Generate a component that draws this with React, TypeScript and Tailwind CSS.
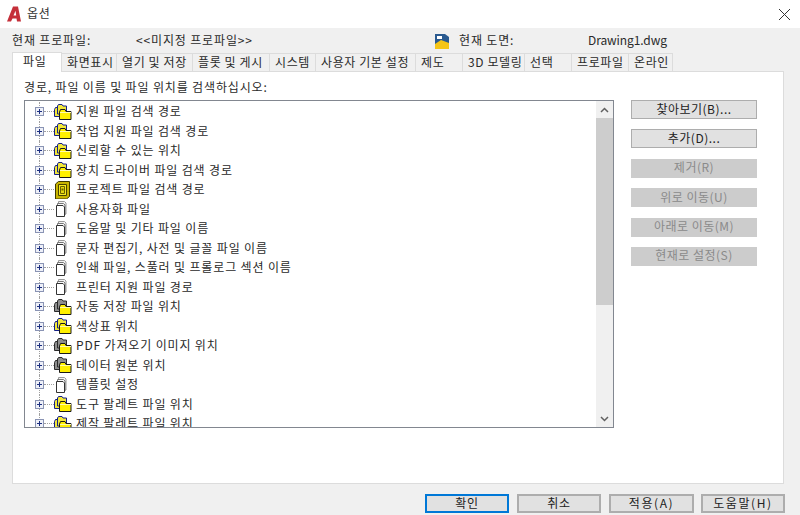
const font = 'font-["Noto_Sans_CJK_KR","Noto_Sans",sans-serif]'

const tabs = [
  { label: '파일', w: 'w-[50px]' },
  { label: '화면표시', w: 'w-[55px]' },
  { label: '열기 및 저장', w: 'w-[76px]' },
  { label: '플롯 및 게시', w: 'w-[77px]' },
  { label: '시스템', w: 'w-[46px]' },
  { label: '사용자 기본 설정', w: 'w-[100px]' },
  { label: '제도', w: 'w-[47px]' },
  { label: '3D 모델링', w: 'w-[62px]' },
  { label: '선택', w: 'w-[47px]' },
  { label: '프로파일', w: 'w-[57px]' },
  { label: '온라인', w: 'w-[44px]' },
]

const rows: { label: string; icon: 'blue' | 'dark' | 'project' | 'doc' }[] = [
  { label: '지원 파일 검색 경로', icon: 'blue' },
  { label: '작업 지원 파일 검색 경로', icon: 'blue' },
  { label: '신뢰할 수 있는 위치', icon: 'blue' },
  { label: '장치 드라이버 파일 검색 경로', icon: 'blue' },
  { label: '프로젝트 파일 검색 경로', icon: 'project' },
  { label: '사용자화 파일', icon: 'doc' },
  { label: '도움말 및 기타 파일 이름', icon: 'doc' },
  { label: '문자 편집기, 사전 및 글꼴 파일 이름', icon: 'doc' },
  { label: '인쇄 파일, 스풀러 및 프롤로그 섹션 이름', icon: 'doc' },
  { label: '프린터 지원 파일 경로', icon: 'doc' },
  { label: '자동 저장 파일 위치', icon: 'dark' },
  { label: '색상표 위치', icon: 'blue' },
  { label: 'PDF 가져오기 이미지 위치', icon: 'dark' },
  { label: '데이터 원본 위치', icon: 'dark' },
  { label: '템플릿 설정', icon: 'doc' },
  { label: '도구 팔레트 파일 위치', icon: 'blue' },
  { label: '제작 팔레트 파일 위치', icon: 'blue' },
]

const sideButtons = [
  { label: '찾아보기(B)...', on: true },
  { label: '추가(D)...', on: true },
  { label: '제거(R)', on: false },
  { label: '위로 이동(U)', on: false },
  { label: '아래로 이동(M)', on: false },
  { label: '현재로 설정(S)', on: false },
]

function RowIcon({ kind }: { kind: string }) {
  if (kind === 'doc') {
    return (
      <svg width="18" height="18" viewBox="0 0 18 18" className="shrink-0">
        <path d="M4.500 1.500h6l1.500 1.500v11h-7.500z" fill="#f2f2f2" stroke="#9a9a9a" />
        <path d="M3.500 3.500h6l1.500 1.500v10h-7.500z" fill="#f8f8f8" stroke="#777" />
        <path d="M2.500 5.500h6.500l1.500 1.500v9.500h-8z" fill="#fff" stroke="#333" />
      </svg>
    )
  }
  if (kind === 'project') {
    return (
      <svg width="18" height="18" viewBox="0 0 18 18" className="shrink-0">
        <path d="M1.500 3l3-2.500h11v15l-3 2.500h-11z" fill="#c8b400" stroke="#3e3800" />
        <path d="M4.500 3.500h8v11h-8z" fill="#f6ea20" stroke="#4a4300" />
        <path d="M6.500 5.500h4v7h-4z" fill="#e6d810" stroke="#6a6000" />
        <path d="M7.500 7.500h2v2h-2z" fill="#6a6000" />
      </svg>
    )
  }
  const back = kind === 'dark' ? '#2a2a2a' : '#141f88'
  const mid = kind === 'dark' ? '#8e8e8e' : '#f2e838'
  return (
    <svg width="18" height="18" viewBox="0 0 18 18" className="shrink-0">
      <path d="M.500 6.500l1-2h4v1h4v8h-9z" fill={mid} stroke={back} />
      <path d="M3.500 3l1-1.500h3.500l1 1.500h3.500v8h-9z" fill={mid} stroke={back} />
      <path d="M5.500 9l1-2.500h4.500l1 2h5v8h-11.500z" fill="#fff000" stroke="#1a1a1a" />
      <path d="M6 9.500h11" stroke="#fffbb0" />
    </svg>
  )
}

function Expander() {
  return (
    <div className="w-[15px] h-full relative shrink-0">
      <span className="absolute left-[6px] top-[5px] size-[9px] bg-[#eef0f8] border border-[#8a94b4] flex items-center justify-center">
        <svg width="5" height="5" viewBox="0 0 5 5">
          <path d="M0 2.500h5M2.500 0v5" stroke="#1c2f80" />
        </svg>
      </span>
    </div>
  )
}

function Row({ label, icon }: { label: string; icon: string }) {
  return (
    <div className="h-[19.5px] flex items-center shrink-0 relative">
      <span className="absolute left-[10px] top-0 bottom-0 border-l border-dotted border-[#a0a0a0]" />
      <Expander />
      <span className="w-[10px] border-t border-dotted border-[#a0a0a0] shrink-0" />
      <RowIcon kind={icon} />
      <span className="ml-[4px] pb-[1px] text-[12px] leading-[16px] tracking-[0.85px] text-[#2a2a2a] whitespace-nowrap">{label}</span>
    </div>
  )
}

function Btn({ label, w, primary, wide }: { label: string; w: string; primary?: boolean; wide?: boolean }) {
  return (
    <div
      className={`${w} h-[19px] pb-[1px] flex items-center justify-center bg-[#e1e1e1] border-2 text-[12px] text-[#222] ${
        wide ? 'tracking-[1.6px]' : 'tracking-[0.8px]'
      } ${primary ? 'border-[#0078d7]' : 'border-[#adadad]'}`}
    >
      {label}
    </div>
  )
}

export default function App() {
  return (
    <div className={`${font} w-[800px] h-[515px] bg-[#f0f0f0] flex flex-col overflow-hidden`}>
      <div className="h-[28px] bg-white flex items-center pl-[7px] shrink-0">
        <svg width="14" height="16" viewBox="0 0 14 16">
          <path d="M0 15.500L6 .5h5l3 15h-4l-.5-3H5.500l-1.500 3z" fill="#c5303a" />
          <path d="M6.500 9.500h2.700L8.500 4.800z" fill="#fff" />
        </svg>
        <span className="ml-[6px] pb-[2px] text-[12px] tracking-[0.8px] text-[#333]">옵션</span>
        <svg width="13" height="13" viewBox="0 0 13 13" className="ml-auto mr-[9px]">
          <path d="M1 1l11 11M12 1L1 12" stroke="#333" />
        </svg>
      </div>

      <div className="h-[24px] pb-[1px] flex items-center text-[12px] tracking-[0.85px] text-[#2a2a2a] shrink-0 pl-[12px]">
        <span className="w-[124px]">현재 프로파일:</span>
        <span className="w-[298px]">&lt;&lt;미지정 프로파일&gt;&gt;</span>
        <svg width="16" height="17" viewBox="0 0 16 17" className="shrink-0 mt-[3px]">
          <path d="M1 1h10l4 3v12H1z" fill="#2a5a90" />
          <path d="M3 3h5v3H3z" fill="#fff" />
          <path d="M1 11l6-4 8 3v6H1z" fill="#f5c518" />
        </svg>
        <span className="ml-[9px] w-[129px]">현재 도면:</span>
        <span className="tracking-[-0.1px]">Drawing1.dwg</span>
      </div>

      <div className="h-[19px] flex items-end pl-[12px] shrink-0 relative z-10">
        {tabs.map((t, i) => (
          <div
            key={t.label}
            className={`${t.w} flex items-center justify-start text-[12px] tracking-[0.6px] text-[#2a2a2a] border-[#dcdcdc] ${
              i === 0 ? 'h-[20px] pl-[10px] pb-[4px] bg-white border-x border-t mb-[-1px]' : 'h-[18px] pl-[5px] pb-[1px] border-r border-t bg-[#f0f0f0]'
            }`}
          >
            {t.label}
          </div>
        ))}
      </div>

      <div className="w-[772px] h-[413px] ml-[12px] bg-white border border-[#dcdcdc] shrink-0 pt-[6px] pl-[11px] flex flex-col">
        <div className="h-[20px] pb-[2px] flex items-center text-[12px] tracking-[0.85px] text-[#2a2a2a] shrink-0">
          경로, 파일 이름 및 파일 위치를 검색하십시오:
        </div>
        <div className="flex mt-[2px]">
          <div className="w-[590px] h-[328px] border border-[#828790] flex overflow-hidden">
            <div className="flex-1 flex flex-col overflow-hidden pl-[4px] pt-[1px]">
              {rows.map((r) => (
                <Row key={r.label} label={r.label} icon={r.icon} />
              ))}
            </div>
            <div className="w-[17px] bg-[#f0f0f0] flex flex-col shrink-0">
              <div className="h-[17px] flex items-center justify-center">
                <svg width="9" height="6" viewBox="0 0 9 6">
                  <path d="M1 5l3.500-3.500L8 5" fill="none" stroke="#606060" strokeWidth="1.500" />
                </svg>
              </div>
              <div className="h-[187px] bg-[#cdcdcd]" />
              <div className="mt-auto h-[17px] flex items-center justify-center">
                <svg width="9" height="6" viewBox="0 0 9 6">
                  <path d="M1 1l3.500 3.500L8 1" fill="none" stroke="#606060" strokeWidth="1.500" />
                </svg>
              </div>
            </div>
          </div>
          <div className="ml-[17px] w-[126px] flex flex-col gap-[10.400px]">
            {sideButtons.map((b) => (
              <div
                key={b.label}
                className={`h-[19px] pb-[2px] flex items-center justify-center text-[12px] tracking-[0.5px] border ${
                  b.on ? 'bg-[#e1e1e1] border-[#adadad] text-[#222]' : 'bg-[#cccccc] border-[#cccccc] text-[#8a8a8a]'
                }`}
              >
                {b.label}
              </div>
            ))}
          </div>
        </div>
      </div>

      <div className="flex pl-[425px] pt-[10px]">
        <Btn label="확인" w="w-[84px]" primary />
        <div className="w-[8px]" />
        <Btn label="취소" w="w-[84px]" />
        <div className="w-[8px]" />
        <Btn label="적용(A)" w="w-[85px]" wide />
        <div className="w-[7px]" />
        <Btn label="도움말(H)" w="w-[84px]" wide />
      </div>
    </div>
  )
}
